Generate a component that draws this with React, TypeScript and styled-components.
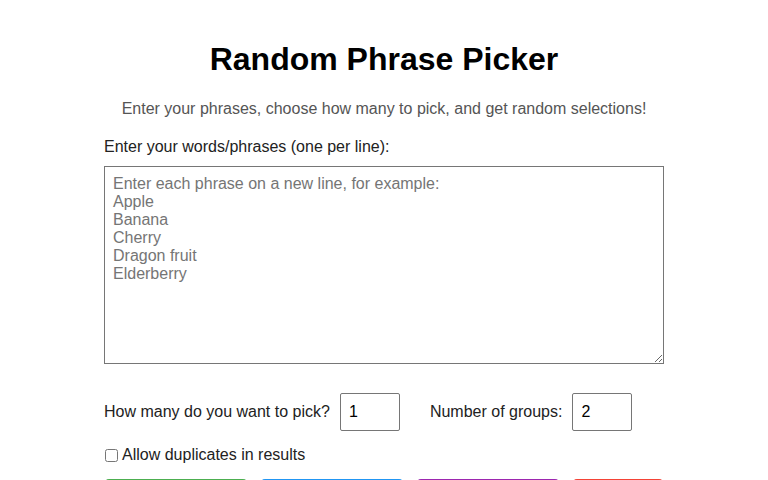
import React, { useState } from "react";
import styled, { createGlobalStyle } from "styled-components";

const GlobalStyle = createGlobalStyle`
  body {
    margin: 0;
    font-family: "Liberation Sans", Arial, sans-serif;
    background: #fff;
    color: #222;
  }
`;

const Container = styled.div`
  max-width: 560px;
  margin: 0 auto;
  padding: 20px;
  display: flex;
  flex-direction: column;
`;

const Title = styled.h1`
  font-size: 32px;
  font-weight: bold;
  color: #000;
  text-align: center;
  margin: 21px 0 22px;
`;

const Subtitle = styled.p`
  font-size: 16px;
  color: #555;
  text-align: center;
  margin: 0 0 20px;
`;

const Label = styled.label`
  display: block;
  font-size: 16px;
  color: #222;
  margin-bottom: 10px;
`;

const PhraseArea = styled.textarea`
  display: block;
  box-sizing: border-box;
  width: 100%;
  height: 198px;
  padding: 8px;
  border: 1px solid #767676;
  border-radius: 0;
  font-family: "Liberation Sans", Arial, sans-serif;
  font-size: 16px;
  line-height: 18px;
  color: #222;
  resize: vertical;
  &::placeholder {
    color: #757575;
  }
`;

const OptionsRow = styled.div`
  display: flex;
  align-items: center;
  margin-top: 29px;
`;

const OptionGroup = styled.div`
  display: flex;
  align-items: center;
  gap: 10px;
  margin-right: 30px;
  font-size: 16px;
  color: #222;
`;

const NumberInput = styled.input`
  box-sizing: border-box;
  width: 60px;
  height: 38px;
  padding: 0 8px;
  border: 1px solid #767676;
  border-radius: 2px;
  font-family: "Liberation Sans", Arial, sans-serif;
  font-size: 16px;
  color: #000;
  &::-webkit-inner-spin-button,
  &::-webkit-outer-spin-button {
    -webkit-appearance: none;
    margin: 0;
  }
  -moz-appearance: textfield;
`;

const CheckRow = styled.label`
  display: flex;
  align-items: center;
  margin-top: 15px;
  font-size: 16px;
  color: #222;
  line-height: 18px;
  input {
    margin: 0 4px 0 1px;
    width: 13px;
    height: 13px;
  }
`;

const Buttons = styled.div`
  display: flex;
  gap: 12px;
  margin-top: 15px;
`;

const ActionButton = styled.button<{ $bg: string; $width: number }>`
  width: ${(p) => p.$width}px;
  background: ${(p) => p.$bg};
  color: #fff;
  border: none;
  border-radius: 5px;
  padding: 12px 0;
  font-family: "Liberation Sans", Arial, sans-serif;
  font-size: 16px;
  text-align: center;
  cursor: pointer;
`;

const placeholder =
  "Enter each phrase on a new line, for example:\nApple\nBanana\nCherry\nDragon fruit\nElderberry";

export default function App() {
  const [text, setText] = useState("");
  const [count, setCount] = useState("1");
  const [groups, setGroups] = useState("2");
  const [dupes, setDupes] = useState(false);

  return (
    <Container>
      <GlobalStyle />
      <Title>Random Phrase Picker</Title>
      <Subtitle>
        Enter your phrases, choose how many to pick, and get random selections!
      </Subtitle>
      <Label htmlFor="phrases">Enter your words/phrases (one per line):</Label>
      <PhraseArea
        id="phrases"
        placeholder={placeholder}
        value={text}
        onChange={(e) => setText(e.target.value)}
      />
      <OptionsRow>
        <OptionGroup>
          <span>How many do you want to pick?</span>
          <NumberInput
            type="number"
            value={count}
            onChange={(e) => setCount(e.target.value)}
          />
        </OptionGroup>
        <OptionGroup>
          <span>Number of groups:</span>
          <NumberInput
            type="number"
            value={groups}
            onChange={(e) => setGroups(e.target.value)}
          />
        </OptionGroup>
      </OptionsRow>
      <CheckRow>
        <input
          type="checkbox"
          checked={dupes}
          onChange={(e) => setDupes(e.target.checked)}
        />
        Allow duplicates in results
      </CheckRow>
      <Buttons>
        <ActionButton $bg="#4CAF50" $width={144}>Pick Random</ActionButton>
        <ActionButton $bg="#2196F3" $width={144}>Make Groups</ActionButton>
        <ActionButton $bg="#9C27B0" $width={144}>Shuffle All</ActionButton>
        <ActionButton $bg="#f44336" $width={92}>Clear</ActionButton>
      </Buttons>
    </Container>
  );
}
